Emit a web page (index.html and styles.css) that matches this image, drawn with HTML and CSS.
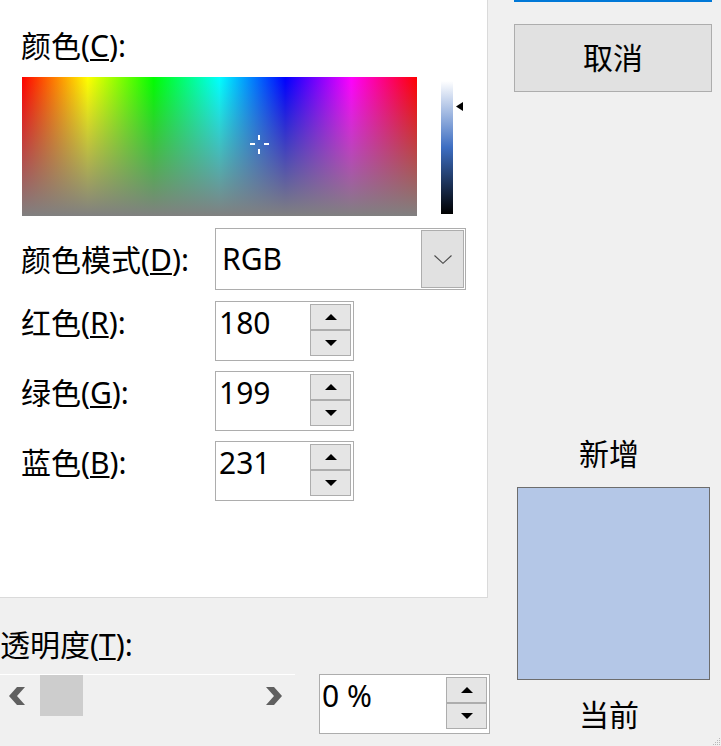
FILE: index.html
```html
<!DOCTYPE html>
<html>
<head>
<meta charset="utf-8">
<link rel="stylesheet" href="styles.css">
</head>
<body>
<div class="dialog">
  <div class="left">
    <div class="panel">
      <div class="lbl top-lbl">颜色(<u>C</u>):</div>
      <div class="picker">
        <div class="spectrum">
          <svg class="cross" width="20" height="20" viewBox="0 0 20 20">
            <rect x="9" y="1" width="2" height="5" fill="#fff"/>
            <rect x="9" y="15" width="2" height="5" fill="#fff"/>
            <rect x="1" y="9" width="5" height="2" fill="#fff"/>
            <rect x="15" y="9" width="5" height="2" fill="#fff"/>
          </svg>
        </div>
        <div class="lum">
          <div class="lum-bar"></div>
          <svg class="lum-arrow" width="7" height="9" viewBox="0 0 7 9"><polygon points="7,0 7,9 0,4.5" fill="#000"/></svg>
        </div>
      </div>
      <div class="fields">
        <div class="lbl mode-lbl">颜色模式(<u>D</u>):</div>
        <div class="combo">
          <span class="combo-text">RGB</span>
          <span class="combo-btn"><svg width="18" height="9" viewBox="0 0 18 9"><polyline points="0.5,0.5 9,8.3 17.5,0.5" fill="none" stroke="#4a4a4a" stroke-width="1.1"/></svg></span>
        </div>

        <div class="lbl spin-lbl">红色(<u>R</u>):</div>
        <div class="spin">
          <span class="val">180</span>
          <span class="spin-btns">
            <span class="sb"><svg width="12" height="6" viewBox="0 0 12 6"><polygon points="0,6 12,6 6,0" fill="#000"/></svg></span>
            <span class="sb"><svg width="12" height="6" viewBox="0 0 12 6"><polygon points="0,0 12,0 6,6" fill="#000"/></svg></span>
          </span>
        </div>

        <div class="lbl spin-lbl">绿色(<u>G</u>):</div>
        <div class="spin">
          <span class="val">199</span>
          <span class="spin-btns">
            <span class="sb"><svg width="12" height="6" viewBox="0 0 12 6"><polygon points="0,6 12,6 6,0" fill="#000"/></svg></span>
            <span class="sb"><svg width="12" height="6" viewBox="0 0 12 6"><polygon points="0,0 12,0 6,6" fill="#000"/></svg></span>
          </span>
        </div>

        <div class="lbl spin-lbl">蓝色(<u>B</u>):</div>
        <div class="spin">
          <span class="val">231</span>
          <span class="spin-btns">
            <span class="sb"><svg width="12" height="6" viewBox="0 0 12 6"><polygon points="0,6 12,6 6,0" fill="#000"/></svg></span>
            <span class="sb"><svg width="12" height="6" viewBox="0 0 12 6"><polygon points="0,0 12,0 6,6" fill="#000"/></svg></span>
          </span>
        </div>
      </div>
    </div>
    <div class="alpha">
      <div class="lbl alpha-lbl">透明度(<u>T</u>):</div>
      <div class="alpha-row">
        <div class="scroll">
          <span class="sarrow sleft"><svg width="16" height="18" viewBox="0 0 16 18"><polygon points="8,0 16,0 8,9 16,18 8,18 0,9" fill="#606060"/></svg></span>
          <span class="thumb"></span>
          <span class="track"></span>
          <span class="sarrow sright"><svg width="16" height="18" viewBox="0 0 16 18"><polygon points="0,0 8,0 16,9 8,18 0,18 8,9" fill="#606060"/></svg></span>
        </div>
        <div class="spin pct">
          <span class="val">0 %</span>
          <span class="spin-btns">
            <span class="sb"><svg width="12" height="6" viewBox="0 0 12 6"><polygon points="0,6 12,6 6,0" fill="#000"/></svg></span>
            <span class="sb"><svg width="12" height="6" viewBox="0 0 12 6"><polygon points="0,0 12,0 6,6" fill="#000"/></svg></span>
          </span>
        </div>
      </div>
    </div>
  </div>
  <div class="right">
    <div class="btn ok"></div>
    <div class="btn cancel">取消</div>
    <div class="cap cap-new">新增</div>
    <div class="swatch"></div>
    <div class="cap cap-cur">当前</div>
  </div>
</div>
<svg class="grip" width="10" height="10" viewBox="0 0 10 10">
  <rect x="8" y="2" width="1" height="1" fill="#b8b8b8"/>
  <rect x="6" y="4" width="1" height="1" fill="#b8b8b8"/>
  <rect x="8" y="4" width="1" height="1" fill="#b8b8b8"/>
  <rect x="4" y="6" width="1" height="1" fill="#b8b8b8"/>
  <rect x="6" y="6" width="1" height="1" fill="#b8b8b8"/>
  <rect x="8" y="6" width="1" height="1" fill="#b8b8b8"/>
  <rect x="2" y="8" width="1" height="1" fill="#b8b8b8"/>
  <rect x="4" y="8" width="1" height="1" fill="#b8b8b8"/>
  <rect x="6" y="8" width="1" height="1" fill="#b8b8b8"/>
  <rect x="8" y="8" width="1" height="1" fill="#b8b8b8"/>
</svg>
</body>
</html>
```
FILE: styles.css
```css
html, body {
  margin: 0;
  padding: 0;
}
body {
  position: relative;
  width: 721px;
  height: 746px;
  overflow: hidden;
  background: #f0f0f0;
  color: #000;
  font-family: "Noto Sans", "Noto Sans CJK SC", sans-serif;
  font-size: 30px;
}
u {
  text-decoration-thickness: 1.5px;
  text-underline-offset: 2px;
}
.dialog {
  display: flex;
  height: 746px;
}
.left {
  width: 490px;
  flex: none;
}
.panel {
  width: 488px;
  height: 598px;
  box-sizing: border-box;
  background: #fff;
  border-right: 1px solid #dadada;
  border-bottom: 1px solid #dadada;
  padding: 28px 0 0 21px;
}
.lbl {
  height: 36px;
  line-height: 36px;
  white-space: nowrap;
}
.top-lbl {
  margin-bottom: 13px;
}
.picker {
  display: flex;
  align-items: flex-start;
}
.spectrum {
  position: relative;
  margin-left: 1px;
  width: 395px;
  height: 139px;
  background:
    linear-gradient(to bottom, rgba(128,128,128,0), #808080),
    linear-gradient(to right, #f00, #ff0 16.67%, #0f0 33.33%, #0ff 50%, #00f 66.67%, #f0f 83.33%, #f00);
}
.cross {
  position: absolute;
  left: 227px;
  top: 57px;
}
.lum {
  display: flex;
  align-items: flex-start;
  margin-left: 24px;
  margin-top: 4px;
}
.lum-bar {
  width: 12px;
  height: 133px;
  background: linear-gradient(to bottom, #fff, hsl(218, 52%, 50%), #000);
}
.lum-arrow {
  margin-left: 3px;
  margin-top: 21px;
}
.fields {
  display: grid;
  grid-template-columns: 194px 251px;
  row-gap: 10px;
  margin-top: 12px;
}
.mode-lbl {
  padding-top: 14px;
}
.spin-lbl {
  padding-top: 4px;
}
.combo {
  display: flex;
  align-items: center;
  height: 62px;
  box-sizing: border-box;
  border: 1px solid #adadad;
  background: #fff;
  margin-bottom: 1px;
}
.combo-text {
  flex: 1;
  padding-left: 6px;
  line-height: 36px;
}
.combo-btn {
  width: 43px;
  height: 58px;
  box-sizing: border-box;
  border: 1px solid #adadad;
  background: #e1e1e1;
  margin-right: 1px;
  display: flex;
  align-items: center;
  justify-content: center;
}
.spin {
  display: flex;
  width: 139px;
  height: 60px;
  box-sizing: border-box;
  border: 1px solid #adadad;
  background: #fff;
}
.spin .val {
  flex: 1;
  padding: 3px 0 0 3px;
  height: 36px;
  line-height: 36px;
  white-space: nowrap;
}
.spin.pct .val {
  padding-left: 2px;
}
.spin-btns {
  display: flex;
  flex-direction: column;
  margin: 2px 2px 0 0;
}
.sb {
  width: 41px;
  height: 26px;
  box-sizing: border-box;
  border: 1px solid #adadad;
  background: #e5e5e5;
  display: flex;
  align-items: center;
  justify-content: center;
}
.alpha-lbl {
  margin-top: 29px;
}
.alpha-row {
  display: flex;
  align-items: flex-start;
  gap: 24px;
  margin-top: 11px;
}
.scroll {
  display: flex;
  align-items: flex-start;
  width: 295px;
  height: 43px;
  box-sizing: border-box;
  border-top: 1px solid #fff;
}
.sarrow {
  width: 40px;
  height: 41px;
  box-sizing: border-box;
  display: flex;
  align-items: center;
  justify-content: center;
}
.sleft {
  padding-right: 7px;
}
.sright {
  padding-right: 2px;
}
.thumb {
  width: 43px;
  height: 41px;
  background: #cdcdcd;
}
.track {
  flex: 1;
}
.spin.pct {
  width: 171px;
}
.right {
  flex: 1;
  display: flex;
  flex-direction: column;
  padding-left: 24px;
}
.btn {
  width: 198px;
  height: 68px;
  flex: none;
  box-sizing: border-box;
  background: #e1e1e1;
  border: 1px solid #adadad;
  display: flex;
  align-items: center;
  justify-content: center;
  line-height: 36px;
}
.ok {
  border: 2px solid #0078d7;
  margin-top: -66px;
}
.cancel {
  margin-top: 22px;
}
.cap {
  width: 190px;
  height: 36px;
  line-height: 36px;
  text-align: center;
  flex: none;
}
.cap-new {
  margin-top: 344px;
}
.swatch {
  flex: none;
  margin: 15px 0 0 3px;
  width: 193px;
  height: 193px;
  box-sizing: border-box;
  border: 1px solid #6d6d6d;
  background: #b4c7e7;
}
.cap-cur {
  margin-top: 17px;
}
.grip {
  position: absolute;
  right: 0;
  bottom: 0;
}
```
